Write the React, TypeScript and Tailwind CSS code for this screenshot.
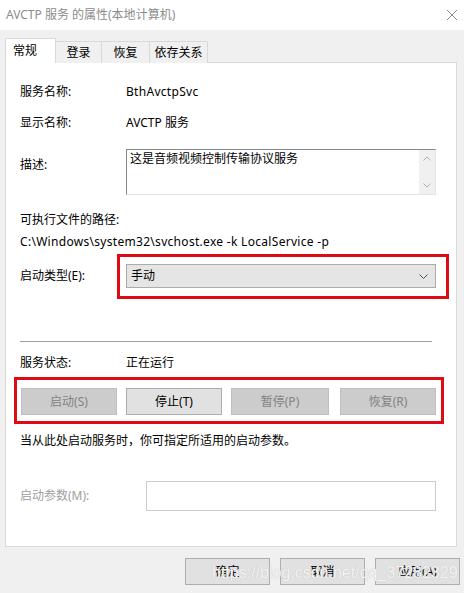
import React from "react";

const font = { fontFamily: '"Noto Sans", "Noto Sans CJK SC", "Microsoft YaHei", sans-serif' };

function Btn({ children, disabled, w = "w-[96px]" }: { children: React.ReactNode; disabled?: boolean; w?: string }) {
  return (
    <div
      className={
        "h-[27px] flex items-center justify-center text-[12px] border " +
        w +
        " " +
        (disabled ? "bg-[#cccccc] border-[#bfbfbf] text-[#838383]" : "bg-[#e1e1e1] border-[#adadad] text-black")
      }
    >
      {children}
    </div>
  );
}

export default function App() {
  return (
    <div className="relative w-[464px] h-[593px] bg-[#f0f0f0] overflow-hidden text-black" style={font}>
      {/* title bar */}
      <div className="h-[30px] bg-white flex items-center justify-between pl-[6px] pr-[6px]">
        <span className="text-[12px] text-[#8c8c8c]">AVCTP 服务 的属性(本地计算机)</span>
        <svg width="12" height="12" viewBox="0 0 12 12">
          <path d="M1 1 L11 11 M11 1 L1 11" stroke="#8c8c8c" strokeWidth="1" />
        </svg>
      </div>

      {/* tabs */}
      <div className="flex items-end h-[33px] pl-[5px] pt-[8px] relative z-10">
        <div className="h-[25px] w-[51px] bg-white border border-[#d9d9d9] border-b-0 flex items-start pl-[7px] pt-[3px] text-[12px]">
          常规
        </div>
        <div className="h-[22px] w-[46px] bg-[#f0f0f0] border border-[#d9d9d9] border-l-0 border-b-0 flex items-center justify-center text-[12px]">
          登录
        </div>
        <div className="h-[22px] w-[48px] bg-[#f0f0f0] border border-[#d9d9d9] border-l-0 border-b-0 flex items-center justify-center text-[12px]">
          恢复
        </div>
        <div className="h-[22px] w-[58px] bg-[#f0f0f0] border border-[#d9d9d9] border-l-0 border-b-0 flex items-center justify-center text-[12px]">
          依存关系
        </div>
      </div>

      {/* panel */}
      <div className="mx-[5px] mr-[7px] -mt-[1px] h-[485px] bg-white border border-[#d9d9d9] pl-[14px] pr-[20px] flex flex-col text-[12px]">
        <div className="mt-[20px] h-[18px] flex items-center">
          <span className="w-[106px]">服务名称:</span>
          <span className="tracking-[0.3px]">BthAvctpSvc</span>
        </div>
        <div className="mt-[13px] h-[18px] flex items-center">
          <span className="w-[106px]">显示名称:</span>
          <span>AVCTP 服务</span>
        </div>
        <div className="mt-[17px] flex">
          <span className="w-[106px] mt-[7px]">描述:</span>
          <div className="flex-1 h-[46px] border-t border-l border-[#828790] border-r border-r-[#e3e3e3] border-b border-b-[#e3e3e3] flex">
            <div className="flex-1 pl-[3px] pt-[0px] leading-[17px]">这是音频视频控制传输协议服务</div>
            <div className="w-[16px] bg-[#f0f0f0] flex flex-col items-center justify-between py-[6px]">
              <svg width="8" height="5" viewBox="0 0 8 5">
                <path d="M0.5 4.5 L4 1 L7.5 4.5" stroke="#b0b0b0" fill="none" strokeWidth="1" />
              </svg>
              <svg width="8" height="5" viewBox="0 0 8 5">
                <path d="M0.5 0.5 L4 4 L7.5 0.5" stroke="#b0b0b0" fill="none" strokeWidth="1" />
              </svg>
            </div>
          </div>
        </div>
        <div className="mt-[16px] h-[18px] flex items-center">可执行文件的路径:</div>
        <div className="mt-[4px] h-[18px] flex items-center tracking-[0.3px]">C:\Windows\system32\svchost.exe -k LocalService -p</div>
        <div className="mt-[13px] flex items-center">
          <span className="w-[106px]">启动类型(E):</span>
          <div className="flex-1 h-[24px] bg-[#e5e5e5] border border-[#acacac] flex items-center justify-between pl-[4px] pr-[7px]">
            <span>手动</span>
            <svg width="9" height="5" viewBox="0 0 9 5">
              <path d="M0.5 0.5 L4.5 4.5 L8.5 0.5" stroke="#555" fill="none" strokeWidth="1" />
            </svg>
          </div>
        </div>
        <div className="mt-[53px] h-[1px] bg-[#a0a0a0] mr-[4px]" />
        <div className="mt-[12px] h-[18px] flex items-center">
          <span className="w-[106px]">服务状态:</span>
          <span>正在运行</span>
        </div>
        <div className="mt-[16px] flex ml-[1px] gap-[9px]">
          <Btn disabled>启动(S)</Btn>
          <Btn>停止(T)</Btn>
          <Btn disabled w="w-[98px]">暂停(P)</Btn>
          <div className="ml-[2px]">
            <Btn disabled>恢复(R)</Btn>
          </div>
        </div>
        <div className="mt-[17px] h-[18px] flex items-center">当从此处启动服务时，你可指定所适用的启动参数。</div>
        <div className="mt-[31px] flex items-center">
          <span className="w-[126px] text-[#a0a0a0]">启动参数(M):</span>
          <div className="flex-1 h-[30px] border border-[#cccccc] bg-white" />
        </div>
      </div>

      {/* bottom buttons */}
      <div className="mt-[11px] flex justify-end gap-[10px] pr-[4px]">
        <Btn w="w-[85px]">确定</Btn>
        <Btn w="w-[85px]">取消</Btn>
        <Btn w="w-[85px]">应用(A)</Btn>
      </div>

      {/* red annotation boxes */}
      <div className="absolute left-[117px] top-[254px] w-[332px] h-[45px] border-[3px] border-[#de0a14]" />
      <div className="absolute left-[14px] top-[377px] w-[430px] h-[47px] border-[3px] border-[#de0a14]" />

      {/* watermark */}
      <div
        className="absolute left-[212px] top-[561px] text-[16px] text-[#f4f4f4] pointer-events-none whitespace-nowrap"
        style={{ fontFamily: '"Liberation Sans", Arial, sans-serif', textShadow: "0 0 1px #b8b8b8" }}
      >
        https://blog.csdn.net/qq_37282329
      </div>
    </div>
  );
}
